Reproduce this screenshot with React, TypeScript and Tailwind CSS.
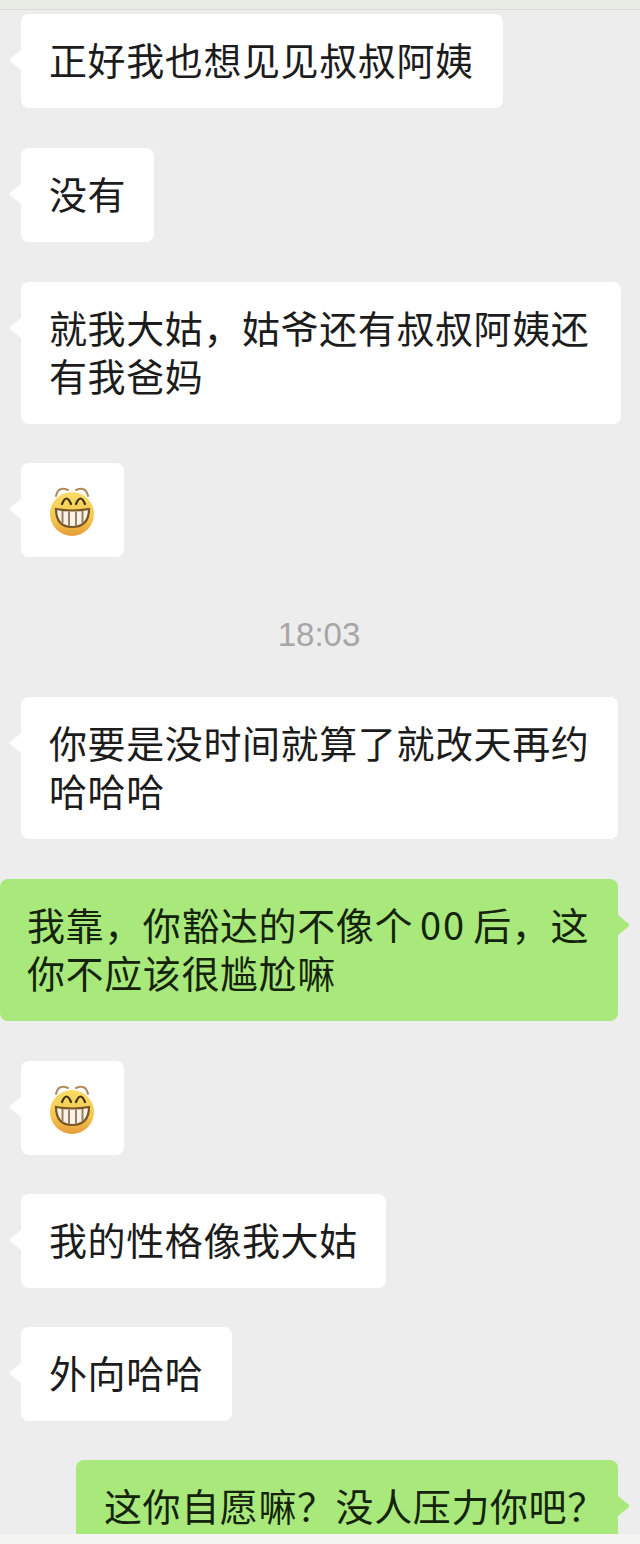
const sans = "font-['Noto_Sans_CJK_SC','Noto_Sans',sans-serif]";

function Tail({ side, color }: { side: "left" | "right"; color: string }) {
  return (
    <svg
      viewBox="0 0 12 24"
      className={`absolute top-[34px] h-6 w-3 ${side === "left" ? "left-[-12px]" : "right-[-12px] rotate-180"}`}
    >
      <path d="M12 2 L1.500 10.500 Q0 12 1.500 13.500 L12 22 Z" fill={color} />
    </svg>
  );
}

function Grin() {
  return (
    <svg viewBox="0 0 48 50" className="h-[50px] w-12 overflow-visible">
      <defs>
        <linearGradient id="grin-face" x1="0" y1="0" x2="0" y2="1">
          <stop offset="0" stopColor="#f9dc66" />
          <stop offset="0.6" stopColor="#f4c84f" />
          <stop offset="1" stopColor="#e59c3a" />
        </linearGradient>
      </defs>
      <path d="M8 9 Q10 -1 20 3 M40 9 Q38 -1 28 3" fill="none" stroke="#b08a5c" strokeWidth="2" strokeLinecap="round" />
      <circle cx="24" cy="27" r="22" fill="url(#grin-face)" />
      <path d="M14 17 Q18.500 6 23 17 M28 17 Q32.500 6 37 17" fill="none" stroke="#3f3018" strokeWidth="2.200" strokeLinecap="round" />
      <path d="M8 22 Q24 25 41 22 Q41 40 24 40 Q8 40 8 22 Z" fill="#f7f2ea" stroke="#7a5526" strokeWidth="2.200" />
      <path d="M14.500 24 V36 M21 24.500 V39 M28 24.500 V39 M34.500 24 V36" stroke="#9a7f5c" strokeWidth="2" />
    </svg>
  );
}

function Bubble({
  mine,
  emoji,
  className = "",
  children,
}: {
  mine?: boolean;
  emoji?: boolean;
  className?: string;
  children: React.ReactNode;
}) {
  return (
    <div
      className={`relative shrink-0 rounded-lg text-[38px] leading-[48px] tracking-[0.6px] ${
        emoji ? "pt-6 pl-[27px]" : "pt-[21px] pb-[25px]"
      } ${mine ? "self-end mr-[22px] bg-[#a9e97b] text-[#14240c]" : "ml-[21px] bg-white text-[#1c1c1c]"} ${className}`}
    >
      {mine ? <Tail side="right" color="#a9e97b" /> : <Tail side="left" color="#ffffff" />}
      {children}
    </div>
  );
}

export default function App() {
  return (
    <div className={`flex h-[1544px] w-[640px] flex-col overflow-hidden bg-[#ededed] ${sans}`}>
      <div className="h-[10px] shrink-0 border-b border-[#d9dbd6] bg-[#e8ece4]" />

      <div className="flex min-h-0 flex-1 flex-col gap-10 overflow-hidden pt-1">
        <Bubble className="w-[482px] pl-7">正好我也想见见叔叔阿姨</Bubble>
        <Bubble className="w-[133px] pl-7">没有</Bubble>
        <Bubble className="w-[600px] pl-7">
          就我大姑，姑爷还有叔叔阿姨还
          <br />
          有我爸妈
        </Bubble>
        <Bubble emoji className="-mt-px h-[94px] w-[103px]">
          <Grin />
        </Bubble>

        <div className="mt-[18px] mb-[2px] shrink-0 pr-[2px] text-center font-['Liberation_Sans',sans-serif] text-[33px] leading-10 text-[#a6a6a6]">
          18:03
        </div>

        <Bubble className="w-[597px] pl-7">
          你要是没时间就算了就改天再约
          <br />
          哈哈哈
        </Bubble>
        <Bubble mine className="w-[618px] pl-[27px]">
          我靠，你豁达的不像个<span className="mx-[7px] tracking-[2px]">00</span>后，这
          <br />
          你不应该很尴尬嘛
        </Bubble>
        <Bubble emoji className="h-[94px] w-[103px]">
          <Grin />
        </Bubble>
        <Bubble className="-mt-px w-[365px] pl-7">我的性格像我大姑</Bubble>
        <Bubble className="-mt-px w-[211px] pl-7">外向哈哈</Bubble>
        <Bubble mine className="-mt-px w-[542px] pl-7">
          这你自愿嘛？没人压力你吧？
        </Bubble>
      </div>

      <div className="relative z-10 h-[10px] shrink-0 bg-[#f4f4f2]" />
    </div>
  );
}
